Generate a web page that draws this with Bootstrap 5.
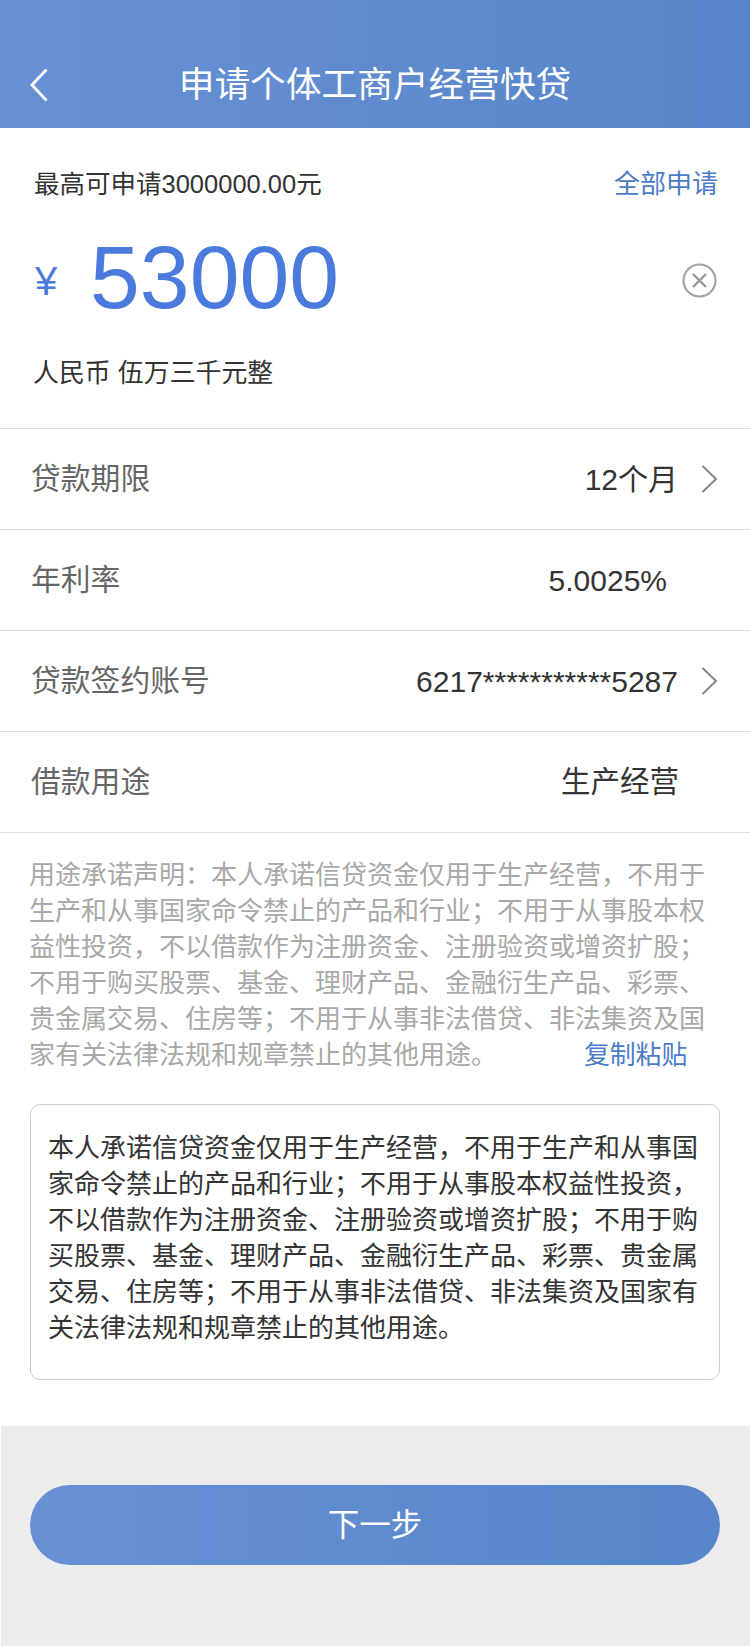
<!DOCTYPE html>
<html lang="zh-CN">
<head>
<meta charset="utf-8">
<meta name="viewport" content="width=device-width, initial-scale=1">
<title>申请个体工商户经营快贷</title>
<link rel="stylesheet" href="https://cdn.jsdelivr.net/npm/bootstrap@5.3.0/dist/css/bootstrap.min.css">
<style>
html,body{margin:0;background:#fff;}
body{width:750px;font-family:"Liberation Sans","Noto Sans CJK SC",sans-serif;color:#333;font-weight:400;}
.app-head{height:128px;padding:64px 30px 0 30px;background:linear-gradient(90deg,#6890d4,#5686c9);color:#fff;display:grid;grid-template-columns:1fr auto 1fr;align-items:start;}
.app-title{font-size:35.7px;line-height:42px;margin:0;font-weight:400;}
.app-back{display:block;width:18px;height:34px;margin-top:4px;}
.quota-row{padding:38.5px 32px 0 34px;font-size:25.5px;line-height:34px;color:#333;}
.quota-all{color:#4a7cc9;font-size:26px;text-decoration:none;}
.amount-row{margin-top:26.5px;padding:0 33px 0 35px;height:100px;}
.amount-yen{font-size:40px;line-height:100px;color:#4a7bdc;width:55px;padding-top:8px;}
.amount-num{font-size:89.6px;line-height:100px;color:#4a7bdc;}
.amount-clear{display:block;width:35px;height:35px;margin-top:6px;}
.amount-cn{margin-top:29px;padding:0 0 38px 33px;font-size:25.9px;line-height:34px;color:#333;border-bottom:1px solid #ddd;}
.list-group-flush>.info-row,.list-group-flush>.info-row:last-child{height:101px;padding:0 32px 0 31px;border-width:0 0 1px;border-style:solid;border-color:#ddd;font-size:29.8px;border-radius:0;}
.info-label{color:#666;}
.info-value{color:#333;font-size:30px;margin-left:auto;padding-top:1px;}
.info-arrow{display:block;width:17px;height:28px;margin-left:23px;}
.list-group-flush>.pad-plain:last-child{padding-right:71px;}
.list-group-flush>.pad-plain .info-value{font-size:29.5px;padding-top:1px;}
.list-group-flush>.pad-rate{padding-right:83px;}
.pledge{padding:24px 30px 0 29px;font-size:26px;line-height:36px;color:#a8a8a8;}
.pledge-copy{color:#4a7cc9;margin-left:87px;text-decoration:none;font-size:25.8px;}
.pledge-box{margin:31px 30px 46px 30px;height:276px;padding:25px 17px 0 17px;font-size:26px;line-height:36px;color:#333;border:1px solid #ccc;border-radius:10px;}
.foot-zone{height:220px;padding:59px 30px 0 29px;background:#ececec;border-left:1px solid #fff;}
.foot-btn{display:block;width:100%;height:80px;border:0;border-radius:40px;color:#fff;font-size:31.5px;line-height:80px;padding:0;background:linear-gradient(90deg,#6890d5,#5686c9);}
.foot-btn:hover{color:#fff;}
</style>
</head>
<body>
<header class="app-head">
  <a href="#" class="app-back" aria-label="返回"><svg width="18" height="34" viewBox="0 0 18 34"><path d="M16.5 1.5 2 17l14.5 15.5" fill="none" stroke="#fff" stroke-width="2.8"/></svg></a>
  <h1 class="app-title">申请个体工商户经营快贷</h1>
</header>
<main>
  <div class="quota-row d-flex justify-content-between align-items-center">
    <span>最高可申请3000000.00元</span>
    <a href="#" class="quota-all">全部申请</a>
  </div>
  <div class="amount-row d-flex align-items-center">
    <span class="amount-yen">¥</span>
    <span class="amount-num">53000</span>
    <a href="#" class="amount-clear ms-auto" aria-label="清除"><svg width="35" height="35" viewBox="0 0 35 35"><circle cx="17.5" cy="17.5" r="16" fill="none" stroke="#a3a3a3" stroke-width="2.2"/><path d="M11 11l13 13M24 11 11 24" fill="none" stroke="#999" stroke-width="2.4"/></svg></a>
  </div>
  <div class="amount-cn">人民币 伍万三千元整</div>
  <div class="list-group list-group-flush">
    <div class="list-group-item info-row d-flex align-items-center bg-white">
      <span class="info-label">贷款期限</span>
      <span class="info-value">12个月</span>
      <svg class="info-arrow" viewBox="0 0 17 28"><path d="M1.5 1 15 14 1.5 27" fill="none" stroke="#888" stroke-width="2"/></svg>
    </div>
    <div class="list-group-item info-row pad-rate d-flex align-items-center bg-white">
      <span class="info-label">年利率</span>
      <span class="info-value">5.0025%</span>
    </div>
    <div class="list-group-item info-row d-flex align-items-center bg-white">
      <span class="info-label">贷款签约账号</span>
      <span class="info-value">6217***********5287</span>
      <svg class="info-arrow" viewBox="0 0 17 28"><path d="M1.5 1 15 14 1.5 27" fill="none" stroke="#888" stroke-width="2"/></svg>
    </div>
    <div class="list-group-item info-row pad-plain d-flex align-items-center bg-white">
      <span class="info-label">借款用途</span>
      <span class="info-value">生产经营</span>
    </div>
  </div>
  <div class="pledge">
    <p class="mb-0">用途承诺声明：本人承诺信贷资金仅用于生产经营，不用于生产和从事国家命令禁止的产品和行业；不用于从事股本权益性投资，不以借款作为注册资金、注册验资或增资扩股；不用于购买股票、基金、理财产品、金融衍生产品、彩票、贵金属交易、住房等；不用于从事非法借贷、非法集资及国</p>
    <div class="d-flex"><span>家有关法律法规和规章禁止的其他用途。</span><a href="#" class="pledge-copy">复制粘贴</a></div>
  </div>
  <div class="pledge-box">本人承诺信贷资金仅用于生产经营，不用于生产和从事国家命令禁止的产品和行业；不用于从事股本权益性投资，不以借款作为注册资金、注册验资或增资扩股；不用于购买股票、基金、理财产品、金融衍生产品、彩票、贵金属交易、住房等；不用于从事非法借贷、非法集资及国家有关法律法规和规章禁止的其他用途。</div>
  <div class="foot-zone">
    <button type="button" class="btn foot-btn">下一步</button>
  </div>
</main>
<script src="https://cdn.jsdelivr.net/npm/bootstrap@5.3.0/dist/js/bootstrap.bundle.min.js"></script>
</body>
</html>
